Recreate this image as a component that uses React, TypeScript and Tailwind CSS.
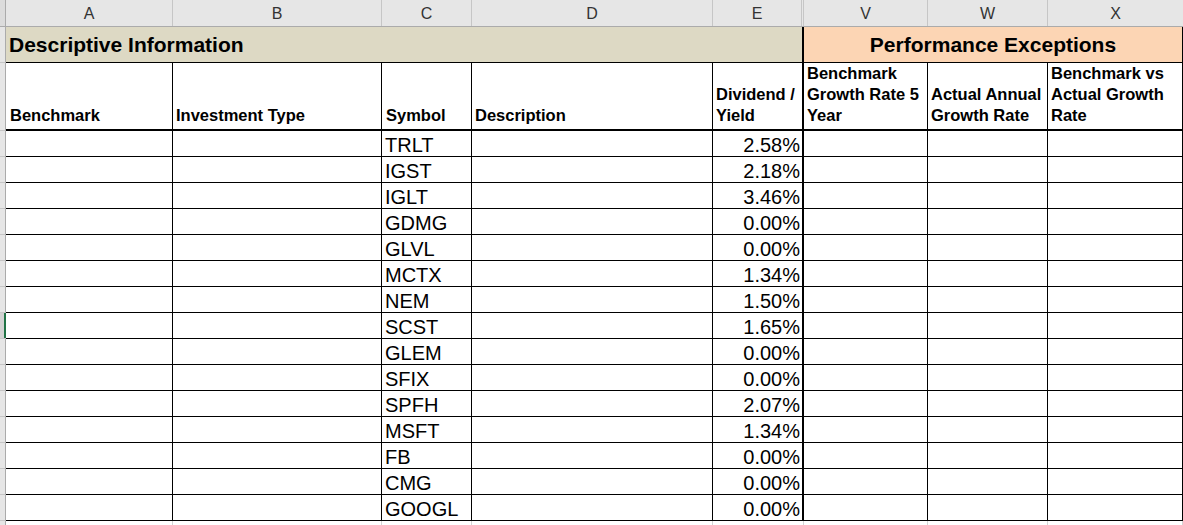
import React from "react";

const rows: [string, string][] = [
  ["TRLT", "2.58%"],
  ["IGST", "2.18%"],
  ["IGLT", "3.46%"],
  ["GDMG", "0.00%"],
  ["GLVL", "0.00%"],
  ["MCTX", "1.34%"],
  ["NEM", "1.50%"],
  ["SCST", "1.65%"],
  ["GLEM", "0.00%"],
  ["SFIX", "0.00%"],
  ["SPFH", "2.07%"],
  ["MSFT", "1.34%"],
  ["FB", "0.00%"],
  ["CMG", "0.00%"],
  ["GOOGL", "0.00%"],
];

function ColHead({ w, label }: { w: string; label: string }) {
  return (
    <div className={`${w} shrink-0 border-r border-[#c6c6c6] flex items-center justify-center text-[16px] text-[#333] pt-[1px]`}>
      {label}
    </div>
  );
}

export default function App() {
  return (
    <div className="w-[1183px] h-[525px] overflow-hidden bg-white font-['Liberation_Sans',Arial,sans-serif] text-black">
      {/* column letters */}
      <div className="flex h-[27px] bg-[#e6e6e6] border-b border-[#ababab]">
        <div className="w-[6px] shrink-0 border-r border-[#ababab] bg-[#dcdcdc]" />
        <div className="w-[167px] shrink-0 border-r border-[#c6c6c6] flex items-center justify-center text-[16px] text-[#333] pt-[1px]">A</div>
        <ColHead w="w-[209px]" label="B" />
        <ColHead w="w-[90px]" label="C" />
        <ColHead w="w-[241px]" label="D" />
        <div className="w-[89px] shrink-0 border-r border-[#c6c6c6] flex items-center justify-center text-[16px] text-[#333] pt-[1px]">E</div>
        <div className="w-[2px] shrink-0 border-r border-[#c6c6c6]" />
        <ColHead w="w-[124px]" label="V" />
        <ColHead w="w-[120px]" label="W" />
        <div className="w-[135px] shrink-0 flex items-center justify-center text-[16px] text-[#333] pt-[1px]">X</div>
      </div>

      {/* title band */}
      <div className="flex h-[36px]">
        <div className="w-[6px] shrink-0 bg-[#e6e6e6] border-r border-b border-r-[#ababab] border-b-[#c6c6c6]" />
        <div className="w-[798px] shrink-0 bg-[#ddd9c4] border-r-2 border-b border-black flex items-center pl-[3px] text-[21px] font-bold">
          Descriptive Information
        </div>
        <div className="w-[379px] shrink-0 bg-[#fcd5b4] border-r border-b border-black flex items-center justify-center text-[21px] font-bold">
          Performance Exceptions
        </div>
      </div>

      {/* header row */}
      <div className="flex h-[68px] text-[16.5px] font-bold leading-[21px]">
        <div className="w-[6px] shrink-0 bg-[#e6e6e6] border-r border-b border-r-[#ababab] border-b-[#c6c6c6]" />
        <div className="w-[167px] shrink-0 border-r border-b-2 border-black flex items-end pl-1 pb-[3px]">Benchmark</div>
        <div className="w-[209px] shrink-0 border-r border-b-2 border-black flex items-end pl-[3px] pb-[3px]">Investment Type</div>
        <div className="w-[90px] shrink-0 border-r border-b-2 border-black flex items-end pl-1 pb-[3px]">Symbol</div>
        <div className="w-[241px] shrink-0 border-r border-b-2 border-black flex items-end pl-[3px] pb-[3px]">Description</div>
        <div className="w-[91px] shrink-0 border-r-2 border-b-2 border-black flex items-end pl-[3px] pb-[3px]">
          <div>Dividend /<br />Yield</div>
        </div>
        <div className="w-[124px] shrink-0 border-r border-b-2 border-black flex items-end pl-[3px] pb-[3px]">
          <div className="whitespace-nowrap">Benchmark<br />Growth Rate 5<br />Year</div>
        </div>
        <div className="w-[120px] shrink-0 border-r border-b-2 border-black flex items-end pl-[3px] pb-[3px]">
          <div className="whitespace-nowrap">Actual Annual<br />Growth Rate</div>
        </div>
        <div className="w-[135px] shrink-0 border-r border-b-2 border-black flex items-end pl-[3px] pb-[3px]">
          <div className="whitespace-nowrap">Benchmark vs<br />Actual Growth<br />Rate</div>
        </div>
      </div>

      {/* data rows */}
      {rows.map(([sym, pct], i) => (
        <div key={sym} className="flex h-[26px] text-[20px] leading-[20px]">
          {i === 7 ? (
            <div className="w-[6px] shrink-0 bg-[#d2d2d2] border-b border-b-[#c6c6c6] flex justify-end">
              <div className="w-[2px] h-full bg-[#217346]" />
            </div>
          ) : (
            <div className="w-[6px] shrink-0 bg-[#e6e6e6] border-r border-b border-r-[#ababab] border-b-[#c6c6c6]" />
          )}
          <div className="w-[167px] shrink-0 border-r border-b border-black" />
          <div className="w-[209px] shrink-0 border-r border-b border-black" />
          <div className="w-[90px] shrink-0 border-r border-b border-black flex items-end pl-[3px] pb-[1px]">{sym}</div>
          <div className="w-[241px] shrink-0 border-r border-b border-black" />
          <div className="w-[91px] shrink-0 border-r-2 border-b border-black flex items-end justify-end pr-[2px] pb-[1px]">{pct}</div>
          <div className="w-[124px] shrink-0 border-r border-b border-black" />
          <div className="w-[120px] shrink-0 border-r border-b border-black" />
          <div className="w-[135px] shrink-0 border-r border-b border-black" />
        </div>
      ))}

      {/* trailing gridlines */}
      <div className="flex h-[6px]">
        <div className="w-[6px] shrink-0 bg-[#e6e6e6] border-r border-[#ababab]" />
        <div className="w-[167px] shrink-0 border-r border-[#d4d4d4]" />
        <div className="w-[209px] shrink-0 border-r border-[#d4d4d4]" />
        <div className="w-[90px] shrink-0 border-r border-[#d4d4d4]" />
        <div className="w-[241px] shrink-0 border-r border-[#d4d4d4]" />
        <div className="w-[91px] shrink-0 border-r border-[#d4d4d4]" />
        <div className="w-[124px] shrink-0 border-r border-[#d4d4d4]" />
        <div className="w-[120px] shrink-0 border-r border-[#d4d4d4]" />
        <div className="w-[135px] shrink-0 border-r border-[#d4d4d4]" />
      </div>
    </div>
  );
}
